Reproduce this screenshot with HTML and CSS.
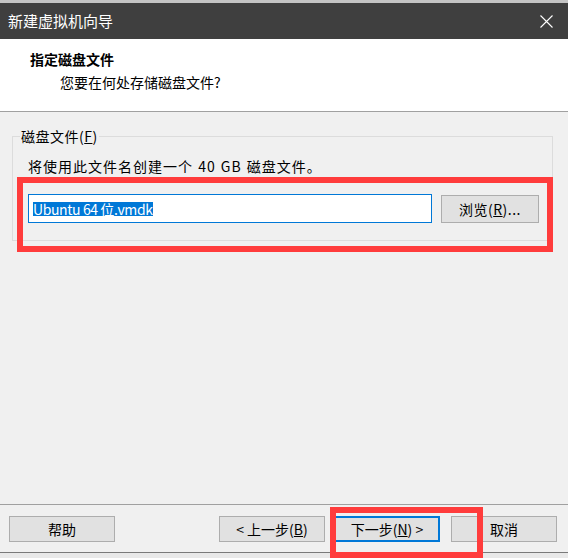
FILE: index.html
```html
<!DOCTYPE html>
<html lang="zh-CN">
<head>
    <meta charset="UTF-8">
    <meta name="viewport" content="width=device-width, initial-scale=1.0">
    <title>新建虚拟机向导</title>
    <link rel="stylesheet" href="styles.css">
</head>
<body>
    <div class="top-strip"></div>
    <div class="window">
        <div class="titlebar">
            <span class="title">新建虚拟机向导</span>
            <span class="close">
                <svg width="13" height="13" viewBox="0 0 13 13">
                    <path d="M0.5 0.5 L12.5 12.5 M12.5 0.5 L0.5 12.5" stroke="#fff" stroke-width="1.1" fill="none"/>
                </svg>
            </span>
        </div>

        <div class="header">
            <div class="heading">指定磁盘文件</div>
            <div class="subheading">您要在何处存储磁盘文件?</div>
        </div>

        <div class="content">
            <fieldset class="group">
                <legend>磁盘文件(<u>F</u>)</legend>
                <p class="hint">将使用此文件名创建一个 40 GB 磁盘文件。</p>
                <div class="file-row">
                    <div class="file-input"><span class="selected">Ubuntu 64 位.vmdk</span></div>
                    <button class="btn browse">浏览(<u>R</u>)...</button>
                </div>
            </fieldset>
        </div>

        <div class="footer">
            <button class="btn help">帮助</button>
            <button class="btn back">&lt; 上一步(<u>B</u>)</button>
            <button class="btn next">下一步(<u>N</u>) &gt;</button>
            <button class="btn cancel">取消</button>
        </div>
    </div>

    <!-- 红色标注框 -->
    <div class="mark mark-file"></div>
    <div class="mark mark-next"></div>
</body>
</html>
```

FILE: styles.css
```css
* { box-sizing: border-box; }
body {
    margin: 0;
    width: 568px;
    height: 558px;
    overflow: hidden;
    background: #e9e9e9;
    font-family: "Noto Sans CJK SC", "Noto Sans", sans-serif;
    font-size: 14px;
    color: #000;
}
.top-strip { height: 3px; background: #c4c4c4; }
.window { background: #f0f0f0; border-bottom: 1px solid #7a7a7a; }

/* 标题栏 */
.titlebar {
    height: 36px;
    background: #3f3f3f;
    display: flex;
    align-items: center;
    padding-left: 8px;
}
.title { color: #fff; font-size: 15px; line-height: 20px; }
.close { margin-left: auto; margin-right: 15px; display: flex; }

/* 页头 */
.header {
    height: 73px;
    background: #fff;
    border-bottom: 1px solid #a0a0a0;
    padding: 10px 0 0 30px;
}
.heading { font-weight: bold; line-height: 20px; }
.subheading { line-height: 20px; margin: 3px 0 0 30px; }

/* 磁盘文件分组 */
.content { height: 392px; padding: 14px 15px 0 12px; }
.group {
    margin: 0;
    border: 1px solid #dcdcdc;
    padding: 0 13px 17px 15px;
}
.group legend {
    line-height: 20px;
    padding: 0 1px;
    margin-left: -8px;
    letter-spacing: 0.5px;
}
.hint { margin: 10px 0 0; line-height: 20px; letter-spacing: 1px; word-spacing: 1px; }
.file-row { display: flex; align-items: center; gap: 9px; margin-top: 18px; }
.file-input {
    flex: 1;
    height: 29px;
    background: #fff;
    border: 1px solid #0078d7;
    padding-left: 4px;
    display: flex;
    align-items: center;
}
.selected {
    background: #0078d7;
    color: #fff;
    line-height: 14px;
    height: 14px;
    letter-spacing: -0.4px;
}

/* 按钮 */
.btn {
    font-family: inherit;
    font-size: 14px;
    height: 26px;
    width: 106px;
    padding: 0;
    background: #e1e1e1;
    border: 1px solid #adadad;
    color: #000;
    line-height: 20px;
}
.browse { width: 98px; height: 28px; letter-spacing: 0.5px; }

.footer {
    height: 48px;
    border-top: 1px solid #a0a0a0;
    display: flex;
    align-items: flex-start;
    padding-top: 11px;
}
.help { margin-left: 9px; }
.back { margin-left: auto; }
.next { margin-left: 9px; border: 2px solid #0078d7; }
.cancel { margin-left: 11px; margin-right: 11px; }

/* 标注 */
.mark { position: absolute; border: 6px solid #ff3c3c; }
.mark-file { left: 17px; top: 177px; width: 536px; height: 75px; }
.mark-next { left: 330px; top: 507px; width: 153px; height: 51px; }
```
